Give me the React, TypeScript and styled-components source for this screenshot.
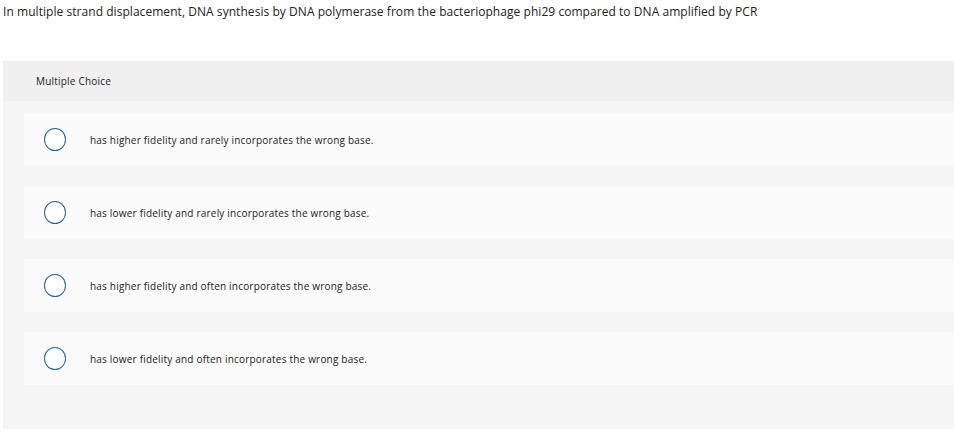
import React from 'react'
import styled, { createGlobalStyle } from 'styled-components'

const choices = [
  'has higher fidelity and rarely incorporates the wrong base.',
  'has lower fidelity and rarely incorporates the wrong base.',
  'has higher fidelity and often incorporates the wrong base.',
  'has lower fidelity and often incorporates the wrong base.',
]

export default function App() {
  return (
    <>
      <GlobalStyle />
      <Page>
        <Prompt>
          In multiple strand displacement, DNA synthesis by DNA polymerase from the bacteriophage phi29
          compared to DNA amplified by PCR
        </Prompt>
        <Panel>
          <PanelHeader>Multiple Choice</PanelHeader>
          <ChoiceList>
            {choices.map((text) => (
              <Choice key={text}>
                <Radio />
                <ChoiceText>{text}</ChoiceText>
              </Choice>
            ))}
          </ChoiceList>
        </Panel>
      </Page>
    </>
  )
}

const GlobalStyle = createGlobalStyle`
  html, body {
    margin: 0;
    padding: 0;
    background: #ffffff;
    overflow: hidden;
  }
  body {
    font-family: "Open Sans", Arial, sans-serif;
    color: #222222;
  }
`

const Page = styled.div`
  width: 954px;
  padding: 4px 0 0 3px;
  box-sizing: border-box;
`

const Prompt = styled.div`
  font-size: 12px;
  line-height: 16px;
  letter-spacing: 0.05px;
  color: #222222;
  white-space: nowrap;
`

const Panel = styled.div`
  margin-top: 41px;
  width: 960px;
  background: #f5f5f5;
`

const PanelHeader = styled.div`
  height: 40px;
  background: #f0f0f0;
  padding-left: 33px;
  display: flex;
  align-items: center;
  font-size: 10px;
  letter-spacing: 0.2px;
  color: #222222;
`

const ChoiceList = styled.div`
  display: flex;
  flex-direction: column;
  gap: 20px;
  padding: 12px 0 44px 21px;
`

const Choice = styled.div`
  height: 53px;
  background: #fafafa;
  display: flex;
  align-items: center;
  padding-left: 20px;
`

const Radio = styled.span`
  width: 20px;
  height: 21px;
  border: 1.5px solid #2d6497;
  border-radius: 50%;
  background: #ffffff;
  flex-shrink: 0;
`

const ChoiceText = styled.span`
  margin-left: 24px;
  font-size: 10px;
  letter-spacing: 0.2px;
  color: #222222;
`
